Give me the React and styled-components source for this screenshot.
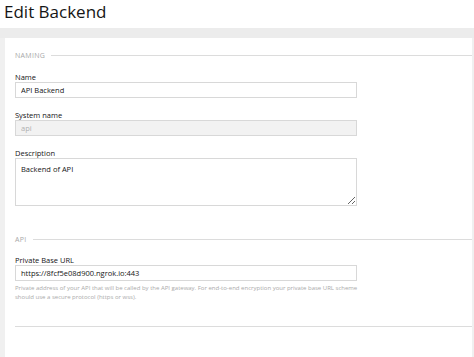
import React from "react";
import styled, { createGlobalStyle } from "styled-components";

const Global = createGlobalStyle`
  html, body { margin: 0; padding: 0; background: #fff; }
  body { font-family: "Open Sans", "Liberation Sans", sans-serif; color: #151515; }
  * { box-sizing: border-box; }
`;

const Page = styled.div`
  width: 474px;
  height: 357px;
  overflow: hidden;
  display: flex;
  flex-direction: column;
`;

const Title = styled.h1`
  margin: 0;
  padding: 0 0 0 4px;
  height: 28px;
  font-size: 17px;
  font-weight: 400;
  line-height: 24px;
  color: #151515;
`;

const TopBar = styled.div`
  height: 10px;
  background: #ececec;
`;

const Body = styled.div`
  flex: 1;
  display: flex;
  background: #f0f0f0;
  padding: 0 2px 0 5px;
`;

const Panel = styled.form`
  flex: 1;
  background: #fff;
  padding: 12px 0 0 10px;
  display: flex;
  flex-direction: column;
`;

const Legend = styled.div`
  display: flex;
  align-items: center;
  gap: 6px;
  font-size: 7px;
  letter-spacing: 0.3px;
  color: #a8a8a8;
  text-transform: uppercase;
  height: 10px;
  margin-bottom: ${(p) => p.$mb}px;
  &::after {
    content: "";
    flex: 1;
    height: 1px;
    background: #dcdcdc;
  }
`;

const Field = styled.div`
  display: flex;
  flex-direction: column;
  width: 342px;
  margin-bottom: ${(p) => p.$mb || 0}px;
`;

const Label = styled.label`
  font-size: 7.5px;
  line-height: 10px;
  color: #151515;
  height: 10px;
`;

const Input = styled.input`
  height: 16px;
  width: 100%;
  border: 1px solid #d8d8d8;
  background: ${(p) => (p.disabled ? "#f2f2f2" : "#fff")};
  color: ${(p) => (p.disabled ? "#b0b0b0" : "#151515")};
  font-family: "Open Sans", "Liberation Sans", sans-serif;
  font-size: 7.5px;
  padding: 0 5px;
  outline: none;
`;

const TextArea = styled.textarea`
  height: 48px;
  width: 100%;
  border: 1px solid #d8d8d8;
  background: #fff;
  color: #151515;
  font-family: "Open Sans", "Liberation Sans", sans-serif;
  font-size: 7.5px;
  padding: 5px 5px;
  resize: vertical;
  outline: none;
`;

const Help = styled.div`
  margin-top: 3px;
  font-size: 6px;
  line-height: 9px;
  color: #aaa;
  width: 352px;
`;

const Divider = styled.div`
  height: 1px;
  background: #dcdcdc;
  margin-top: ${(p) => p.$mt}px;
`;

export default function App() {
  return (
    <>
      <Global />
      <Page>
        <Title>Edit Backend</Title>
        <TopBar />
        <Body>
          <Panel onSubmit={(e) => e.preventDefault()}>
            <Legend $mb={12}>Naming</Legend>
            <Field $mb={12}>
              <Label>Name</Label>
              <Input defaultValue="API Backend" />
            </Field>
            <Field $mb={12}>
              <Label>System name</Label>
              <Input disabled defaultValue="api" />
            </Field>
            <Field $mb={28}>
              <Label>Description</Label>
              <TextArea defaultValue="Backend of API" />
            </Field>
            <Legend $mb={11}>API</Legend>
            <Field>
              <Label>Private Base URL</Label>
              <Input defaultValue="https://8fcf5e08d900.ngrok.io:443" />
            </Field>
            <Help>
              Private address of your API that will be called by the API gateway. For end-to-end encryption your private base URL scheme should use a secure protocol (https or wss).
            </Help>
            <Divider $mt={24} />
          </Panel>
        </Body>
      </Page>
    </>
  );
}
